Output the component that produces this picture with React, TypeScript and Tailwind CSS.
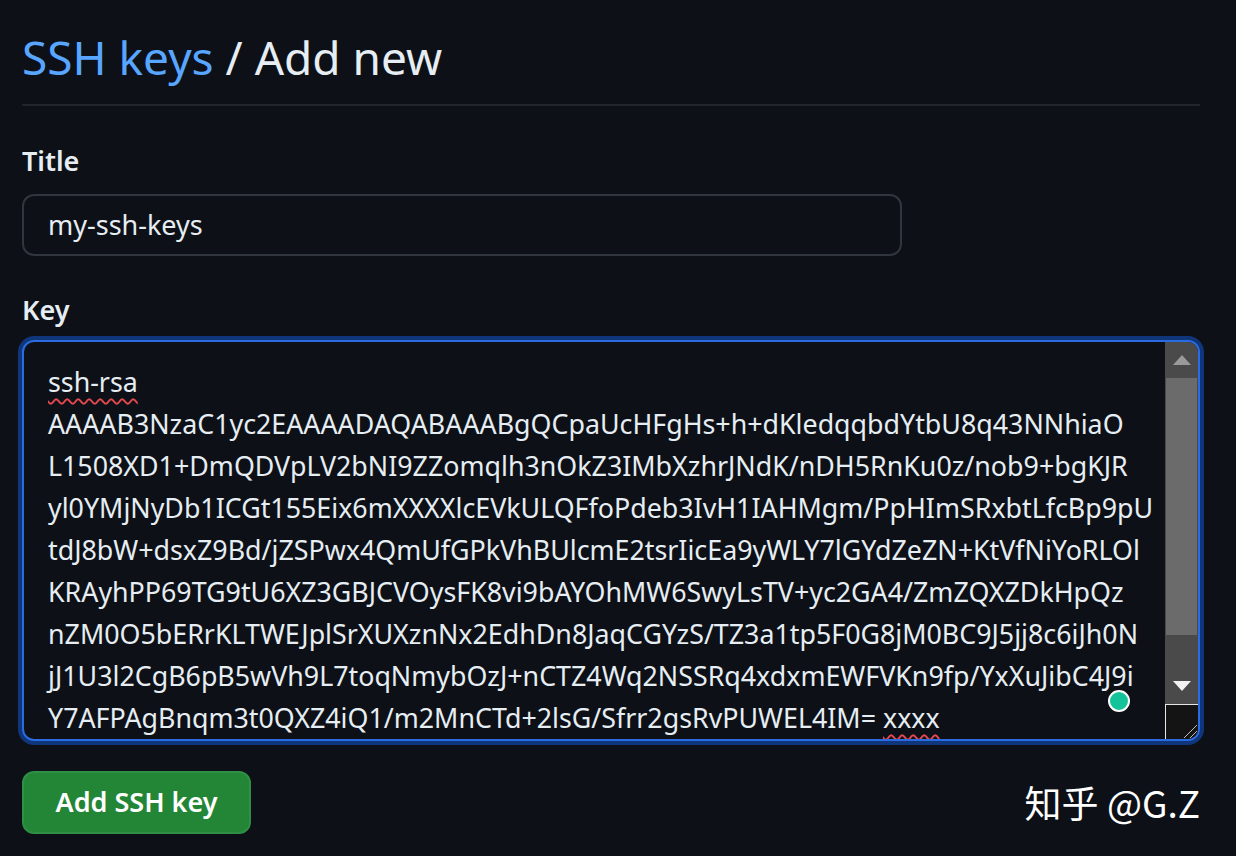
import React from "react";

const keyLines = [
    "AAAAB3NzaC1yc2EAAAADAQABAAABgQCpaUcHFgHs+h+dKledqqbdYtbU8q43NNhiaO",
    "L1508XD1+DmQDVpLV2bNI9ZZomqlh3nOkZ3IMbXzhrJNdK/nDH5RnKu0z/nob9+bgKJR",
    "yl0YMjNyDb1ICGt155Eix6mXXXXlcEVkULQFfoPdeb3IvH1IAHMgm/PpHImSRxbtLfcBp9pU",
    "tdJ8bW+dsxZ9Bd/jZSPwx4QmUfGPkVhBUlcmE2tsrIicEa9yWLY7lGYdZeZN+KtVfNiYoRLOl",
    "KRAyhPP69TG9tU6XZ3GBJCVOysFK8vi9bAYOhMW6SwyLsTV+yc2GA4/ZmZQXZDkHpQz",
    "nZM0O5bERrKLTWEJplSrXUXznNx2EdhDn8JaqCGYzS/TZ3a1tp5F0G8jM0BC9J5jj8c6iJh0N",
    "jJ1U3l2CgB6pB5wVh9L7toqNmybOzJ+nCTZ4Wq2NSSRq4xdxmEWFVKn9fp/YxXuJibC4J9i",
];

function Scrollbar() {
    return (
        <div className="flex w-[33px] shrink-0 flex-col bg-[#4a4a4a]">
            <div className="flex h-[36px] items-center justify-center">
                <svg width="18" height="10" viewBox="0 0 18 10">
                    <path d="M9 0 L18 10 L0 10 Z" fill="#9a9a9a" />
                </svg>
            </div>
            <div className="flex flex-1 flex-col">
                <div className="mx-[1px] h-[257px] bg-[#6b6b6b]" />
            </div>
            <div className="flex h-[36px] items-center justify-center">
                <svg width="18" height="10" viewBox="0 0 18 10">
                    <path d="M0 0 L18 0 L9 10 Z" fill="#f2f2f2" />
                </svg>
            </div>
            <div className="relative h-[35px] border-l border-t border-[#e6e6e6] bg-[#141414]">
                <svg className="absolute bottom-0 right-0" width="18" height="18" viewBox="0 0 18 18">
                    <path d="M17 4 L4 17 M17 10 L10 17" stroke="#bdbdbd" strokeWidth="1" />
                </svg>
            </div>
        </div>
    );
}

export default function App() {
    return (
        <div className="min-h-[856px] w-full bg-[#0d1117] text-[#c9d1d9]" style={{ fontFamily: '"Noto Sans", "Open Sans", "Noto Sans CJK SC", sans-serif' }}>
            <div className="ml-[22px] flex w-[1178px] flex-col">
                {/* heading */}
                <div className="border-b-2 border-[#21262d] pt-[24px] pb-[14px]">
                    <h2 className="text-[46px] leading-[66px] font-normal">
                        <span className="text-[#58a6ff]">SSH keys</span>
                        <span className="text-[#e6edf3]"> / Add new</span>
                    </h2>
                </div>

                <label className="mt-[35px] text-[27px] leading-[40px] font-semibold text-[#e6edf3]">Title</label>
                <div className="mt-[13px] flex h-[62px] w-[880px] items-center rounded-[12px] border-2 border-[#30363d] bg-[#0d1117] pl-[24px]">
                    <span className="text-[27px] text-[#e6edf3]">my-ssh-keys</span>
                </div>

                <label className="mt-[34px] text-[27px] leading-[40px] font-semibold text-[#e6edf3]">Key</label>
                <div className="relative mt-[10px] flex h-[401px] w-[1178px] overflow-hidden rounded-[12px] border-2 border-[#2b6be0] bg-[#0d1117] shadow-[0_0_0_4px_#0f357a]">
                    <div className="flex-1 overflow-hidden pl-[24px] pt-[19px] text-[26.8px] leading-[42px] whitespace-nowrap text-[#e6edf3]">
                        <div>
                            <span className="underline decoration-wavy decoration-[#e5484d] decoration-[1.5px] underline-offset-[6px]">ssh-rsa</span>
                        </div>
                        {keyLines.map((line) => (
                            <div key={line}>{line}</div>
                        ))}
                        <div>
                            Y7AFPAgBnqm3t0QXZ4iQ1/m2MnCTd+2lsG/Sfrr2gsRvPUWEL4IM={" "}
                            <span className="underline decoration-wavy decoration-[#e5484d] decoration-[1.5px] underline-offset-[6px]">xxxx</span>
                        </div>
                    </div>
                    <Scrollbar />
                    {/* grammar checker badge */}
                    <div className="absolute left-[1084px] top-[348px] h-[22px] w-[22px] rounded-full border-2 border-white bg-[#15c39a]" />
                </div>

                <div className="mt-[30px] flex items-center justify-between">
                    <button className="h-[63px] w-[229px] rounded-[12px] border-2 border-[#2f8f44] bg-[#238636] text-[27px] font-semibold text-white">
                        Add SSH key
                    </button>
                    <span className="text-[37px] text-white" style={{ fontFamily: '"Noto Sans CJK SC", "Noto Sans", sans-serif' }}>知乎 @G.Z</span>
                </div>
            </div>
        </div>
    );
}
